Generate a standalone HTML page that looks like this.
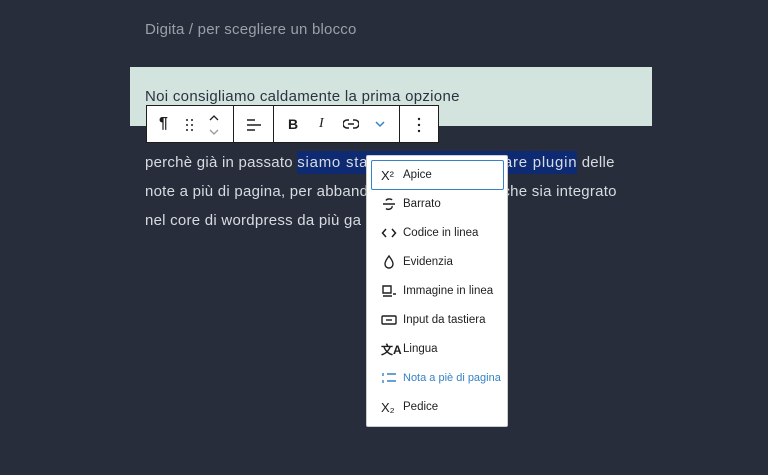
<!DOCTYPE html>
<html><head><meta charset="utf-8"><style>
*{margin:0;padding:0;box-sizing:border-box}
body{width:768px;height:475px;background:#272d3b;font-family:"Liberation Sans",sans-serif;position:relative;overflow:hidden}
.a{position:absolute;white-space:nowrap}
.ph{left:145px;top:21px;font-size:15px;color:#9ba0a8;letter-spacing:0.2px}
.blk{left:130px;top:67px;width:522px;height:59px;background:#d3e4de}
.noi{left:145px;top:88px;font-size:15px;color:#2c3340;letter-spacing:0.3px}
.tb{left:146px;top:105px;width:293px;height:38px;background:#fff;border:1px solid #1e1e1e}
.sep{position:absolute;top:0;width:1px;height:36px;background:#1e1e1e}
.line{left:145px;font-size:15px;color:#d8dbe0;letter-spacing:0.25px}
.line b{font-weight:normal;background:#0d2a73;padding:3px 0;letter-spacing:0.75px}
.menu{left:366px;top:155px;width:142px;height:272px;background:#fff;border:1px solid #ccc;border-radius:2px}
.it{position:absolute;left:14px;font-size:11.5px;color:#1e1e1e;display:flex;align-items:center;height:20px}
.it svg{width:16px;height:16px;margin-right:6px}
.ap{position:absolute;left:4px;top:4px;width:133px;height:30px;border:1.5px solid #3582c4;border-radius:2px}
</style></head><body>
<div class="a ph">Digita / per scegliere un blocco</div>
<div class="a blk"></div>
<div class="a noi">Noi consigliamo caldamente la prima opzione</div>
<div class="a line" style="top:154px">perchè già in passato <b>siamo stati costretti a installare plugin</b> delle</div>
<div class="a line" style="top:183px">note a più di pagina, per abbandonarli e preferiamo che sia integrato</div>
<div class="a line" style="top:212px">nel core di wordpress da più ga</div>
<div class="a tb">
 <div class="sep" style="left:86px"></div><div class="sep" style="left:126px"></div><div class="sep" style="left:252px"></div>
 <div class="a" style="left:12px;top:9px;font-size:16px;font-weight:bold;color:#1e1e1e">¶</div>
 <svg class="a" style="left:38px;top:12px" width="10" height="14"><g fill="#1e1e1e"><circle cx="2" cy="2" r="1"/><circle cx="7" cy="2" r="1"/><circle cx="2" cy="7" r="1"/><circle cx="7" cy="7" r="1"/><circle cx="2" cy="12" r="1"/><circle cx="7" cy="12" r="1"/></g></svg>
 <svg class="a" style="left:60px;top:7px" width="14" height="24" fill="none" stroke-width="1.3"><path d="M3 7 L7 3 L11 7" stroke="#1e1e1e"/><path d="M3 17 L7 21 L11 17" stroke="#999"/></svg>
 <svg class="a" style="left:99px;top:12px" width="16" height="14" stroke="#1e1e1e" stroke-width="1.5"><path d="M1 2H9M1 7H15M1 12H9"/></svg>
 <div class="a" style="left:141px;top:10px;font-size:14px;font-weight:bold;color:#1e1e1e">B</div>
 <div class="a" style="left:172px;top:10px;font-size:14px;font-style:italic;font-family:'Liberation Serif',serif;color:#1e1e1e">I</div>
 <svg class="a" style="left:196px;top:12px" width="16" height="12" fill="none" stroke="#1e1e1e" stroke-width="1.5"><path d="M6 2H4a4 4 0 0 0 0 8h2M10 2h2a4 4 0 0 1 0 8h-2M5 6h6"/></svg>
 <svg class="a" style="left:227px;top:14px" width="12" height="8" fill="none" stroke="#3582c4" stroke-width="1.5"><path d="M2 2L6 6L10 2"/></svg>
 <svg class="a" style="left:270px;top:11px" width="4" height="16" fill="#1e1e1e"><circle cx="2" cy="2" r="1.2"/><circle cx="2" cy="8" r="1.2"/><circle cx="2" cy="14" r="1.2"/></svg>
</div>
<div class="a menu">
 <div class="ap"></div>
 <div class="it" style="top:9px"><span style="font-size:13px;width:22px">X²</span>Apice</div>
 <div class="it" style="top:38px"><svg viewBox="0 0 16 16" fill="none" stroke="#1e1e1e" stroke-width="1.4"><path d="M11 4C10 2.5 6 2.5 5 4.5M2 8h12M11 10c1 2.5-4 4.5-6 2.5"/></svg>Barrato</div>
 <div class="it" style="top:67px"><svg viewBox="0 0 16 16" fill="none" stroke="#1e1e1e" stroke-width="1.5"><path d="M5 4L1.5 8L5 12M11 4L14.5 8L11 12"/></svg>Codice in linea</div>
 <div class="it" style="top:96px"><svg viewBox="0 0 16 16" fill="none" stroke="#1e1e1e" stroke-width="1.4"><path d="M8 2C6 5 4 7 4 10a4 4 0 0 0 8 0c0-3-2-5-4-8z"/></svg>Evidenzia</div>
 <div class="it" style="top:125px"><svg viewBox="0 0 16 16" fill="none" stroke="#1e1e1e" stroke-width="1.4"><path d="M2 3h8v7H2zM2 13h9M12 11h3"/></svg>Immagine in linea</div>
 <div class="it" style="top:154px"><svg viewBox="0 0 16 16" fill="none" stroke="#1e1e1e" stroke-width="1.4"><rect x="1" y="4" width="14" height="8" rx="1"/><path d="M5 8h6"/></svg>Input da tastiera</div>
 <div class="it" style="top:183px"><span style="font-size:12px;width:22px;font-weight:bold">文A</span>Lingua</div>
 <div class="it" style="top:212px;color:#3582c4;font-size:11px"><svg viewBox="0 0 16 16" fill="none" stroke="#3582c4" stroke-width="1.4"><path d="M2 3v3M2 10v3M6 4h9M6 11h9"/></svg>Nota a piè di pagina</div>
 <div class="it" style="top:241px"><span style="font-size:13px;width:22px">X₂</span>Pedice</div>
</div>
</body></html>
